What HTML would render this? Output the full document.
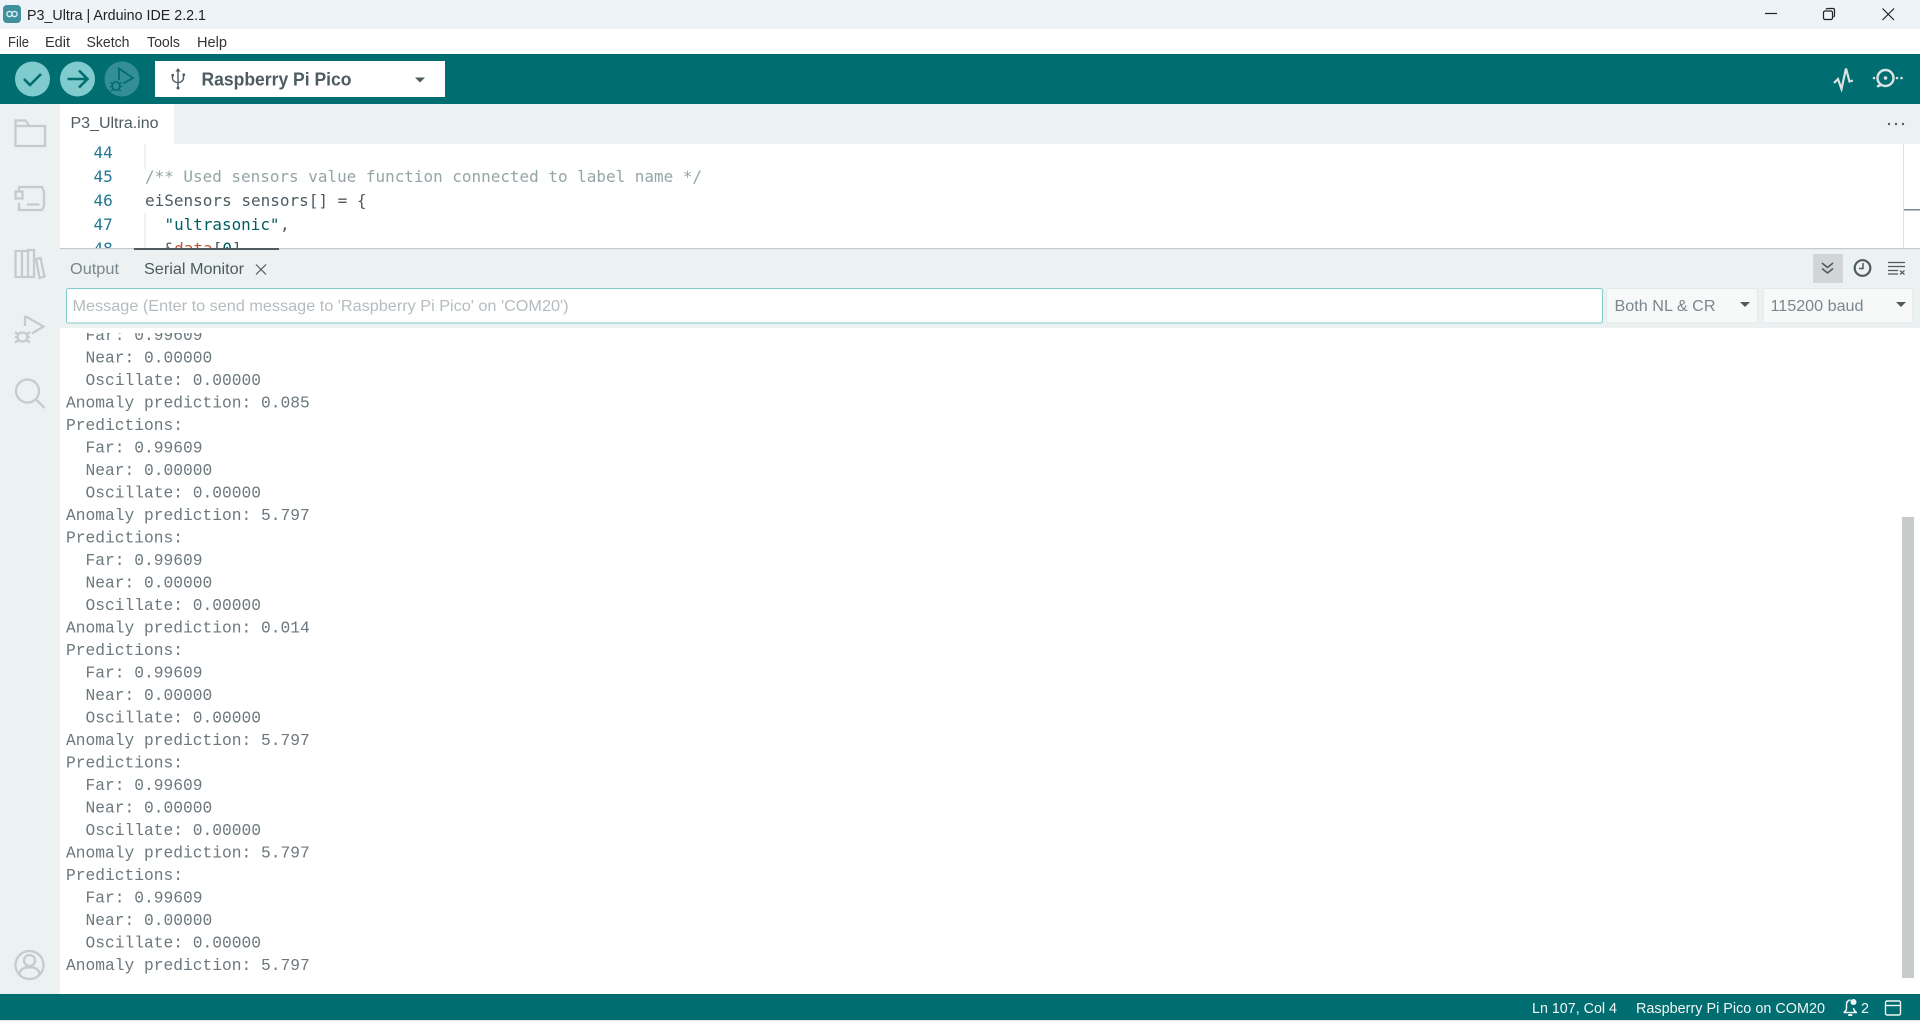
<!DOCTYPE html>
<html lang="en"><head><meta charset="utf-8"><title>P3_Ultra | Arduino IDE 2.2.1</title>
<style>
html,body{margin:0;padding:0;width:1920px;height:1021px;overflow:hidden;background:#fff}
svg{display:block}
.s{font-family:"Liberation Sans",sans-serif}
.c{font-family:"DejaVu Sans Mono",monospace;font-size:16px}
.m{font-family:"Liberation Mono",monospace;font-size:16.25px;fill:#6c787d}
.i{fill:none;stroke:#c6cccd;stroke-width:2.3}
</style></head><body>
<svg width="1920" height="1021" viewBox="0 0 1920 1021" xmlns="http://www.w3.org/2000/svg">
<rect width="1920" height="1021" fill="#fff"/>
<!-- title bar -->
<rect width="1920" height="29" fill="#eef3f8"/>
<rect x="3" y="5" width="18" height="18" rx="4" fill="#3f8f9c"/>
<g fill="none" stroke="#d8eef0" stroke-width="1.4"><circle cx="9.5" cy="14" r="2.6"/><circle cx="14.5" cy="14" r="2.6"/></g>
<text class="s" x="27" y="20" font-size="15" fill="#222" textLength="179" lengthAdjust="spacingAndGlyphs">P3_Ultra | Arduino IDE 2.2.1</text>
<path d="M1765 13.5H1777" stroke="#222" stroke-width="1.2"/>
<g fill="none" stroke="#222" stroke-width="1.2"><rect x="1823.5" y="11" width="9" height="8.5" rx="1.5"/><path d="M1826 9.5q.5-1 2-1h5q1.500 0 1.500 1.500v5q0 1.500-1 2"/></g>
<path d="M1882.500 8.500L1894 20M1894 8.500L1882.500 20" stroke="#222" stroke-width="1.2"/>
<!-- menu -->
<g class="s" font-size="15" fill="#333">
<text x="8" y="47" textLength="21" lengthAdjust="spacingAndGlyphs">File</text>
<text x="45" y="47" textLength="25" lengthAdjust="spacingAndGlyphs">Edit</text>
<text x="86.500" y="47" textLength="43" lengthAdjust="spacingAndGlyphs">Sketch</text>
<text x="147" y="47" textLength="33" lengthAdjust="spacingAndGlyphs">Tools</text>
<text x="197" y="47" textLength="30" lengthAdjust="spacingAndGlyphs">Help</text>
</g>
<!-- toolbar -->
<rect y="54" width="1920" height="50" fill="#006d70"/>
<circle cx="32.500" cy="79" r="17.500" fill="#7fcbcd"/>
<path d="M24 79l6 6 11-11" fill="none" stroke="#006d70" stroke-width="2.600"/>
<circle cx="77.500" cy="79" r="17.500" fill="#7fcbcd"/>
<path d="M67.500 79H87M79 70.500l8.500 8.500-8.500 8.500" fill="none" stroke="#006d70" stroke-width="2.600"/>
<circle cx="122" cy="79" r="17.500" fill="#348e96"/>
<path d="M119 80V68.500L133 78l-10 5.500" fill="none" stroke="#006d70" stroke-width="1.800"/>
<g fill="none" stroke="#006d70" stroke-width="1.600"><ellipse cx="116" cy="86" rx="3.800" ry="4.200"/><path d="M110.500 82.500l2.500 1.500M121.500 82.500l-2.500 1.500M110 86.500h2.500M122 86.500h-2.500M111 91l2.500-1.500M121 91l-2.500-1.500"/></g>
<rect x="155" y="61" width="290" height="36" fill="#fff"/>
<g fill="none" stroke="#4e5b61" stroke-width="1.400"><path d="M178 69V88M172.500 75v3.500q0 3 5.500 4.500q5.500-1.500 5.500-5v-2.500"/></g>
<path d="M175.500 71.500l2.500-3.500 2.500 3.500z" fill="#4e5b61"/><rect x="171.500" y="74" width="2.500" height="2.500" fill="#4e5b61"/><rect x="182.500" y="73.500" width="2.500" height="2.500" fill="#4e5b61"/><circle cx="178" cy="88" r="1.500" fill="#4e5b61"/>
<text class="s" x="201.500" y="85.500" font-size="18" font-weight="700" fill="#4e5b61" textLength="150" lengthAdjust="spacingAndGlyphs">Raspberry Pi Pico</text>
<path d="M415 77.500h10l-5 5z" fill="#4e5b61"/>
<path d="M1834 83l4-4 3.500 10L1846 68.500l3.500 13 3.500-1" fill="none" stroke="#dae3e3" stroke-width="2.200"/>
<g fill="#dae3e3"><circle cx="1885.500" cy="78" r="1.800"/><circle cx="1874" cy="78" r="1.300"/><circle cx="1897" cy="78" r="1.300"/><circle cx="1901.500" cy="78" r="1.300"/></g>
<circle cx="1885.500" cy="78" r="8" fill="none" stroke="#dae3e3" stroke-width="2.400"/><path d="M1881 85l-4 1.500" fill="none" stroke="#dae3e3" stroke-width="2.400"/>
<!-- sidebar and tab bar -->
<rect y="104" width="60" height="890" fill="#ecf1f1"/>
<rect x="60" y="104" width="1860" height="40" fill="#ecf1f1"/>
<rect x="60" y="104" width="114" height="40" fill="#fff"/>
<text class="s" x="70.500" y="128" font-size="15.500" fill="#4e5b61" textLength="88" lengthAdjust="spacingAndGlyphs">P3_Ultra.ino</text>
<g fill="#4e5b61"><circle cx="1889" cy="124" r="1.200"/><circle cx="1896" cy="124" r="1.200"/><circle cx="1903" cy="124" r="1.200"/></g>
<!-- sidebar icons -->
<path class="i" d="M15.500 120.500h10l4 5.500h15.500v20H15.500z"/><path class="i" d="M15.500 126h14"/>
<path class="i" d="M19 191v-4h23l2 5v14l-2 4H19v-7"/><path class="i" d="M15.500 191.500h7v7h-7z"/><path class="i" d="M27 204.500h12.500"/>
<path class="i" d="M15.500 251h6.500v26h-6.500zM22 251h6v26h-6zM28 277v-27h6v27zM34 277h-6"/><path class="i" d="M36 259l4.500-1 4 18.500-5 1.500z"/>
<path class="i" d="M25 316v10M25 316l18.500 10.500L32 333.500"/>
<ellipse class="i" cx="22.500" cy="337" rx="5" ry="4.500"/><path class="i" d="M15 332l3 2M30 332l-3 2M15 337h3M30 337h-3M15 342.500l3-2M30 342.500l-3-2"/>
<circle class="i" cx="27.500" cy="391" r="11.500"/><path class="i" d="M36 399.500l8.500 8.500"/>
<circle class="i" cx="29.500" cy="965" r="14"/><circle class="i" cx="29.500" cy="960.500" r="5.500"/><path class="i" d="M19 975.500q1-7 7-8h7q6 1 7 8"/>
<!-- editor -->
<path d="M145 144v25M145 213v35" stroke="#dfe4e5" stroke-width="1"/>
<g class="c" fill="#237893">
<text x="93.500" y="157.800">44</text><text x="93.500" y="181.800">45</text><text x="93.500" y="205.800">46</text><text x="93.500" y="229.800">47</text><text x="93.500" y="253.800">48</text>
</g>
<defs><clipPath id="ed"><rect x="60" y="144" width="1843" height="104"/></clipPath><clipPath id="mo"><rect x="60" y="333" width="1860" height="661"/></clipPath></defs>
<g clip-path="url(#ed)">
<text class="c" x="145" y="181.800" fill="#95a5a6" textLength="557" lengthAdjust="spacingAndGlyphs">/** Used sensors value function connected to label name */</text>
<text class="c" x="145" y="205.800" fill="#4e5b61">eiSensors sensors[] = {</text>
<text class="c" x="164.500" y="229.800" fill="#005c5f" textLength="115" lengthAdjust="spacingAndGlyphs">"ultrasonic"</text>
<text class="c" x="280" y="229.800" fill="#4e5b61">,</text>
<text class="c" x="164.500" y="253.800"><tspan fill="#4e5b61">&amp;</tspan><tspan fill="#c0563b">data</tspan><tspan fill="#4e5b61">[</tspan><tspan fill="#005c5f">0</tspan><tspan fill="#4e5b61">]</tspan></text>
</g>
<path d="M1903.500 144V248" stroke="#dfe2e3" stroke-width="1"/>
<rect x="1904" y="209" width="16" height="1.500" fill="#7b8a91"/>
<!-- panel header -->
<rect x="60" y="249" width="1860" height="79" fill="#ecf1f1"/>
<rect x="60" y="248" width="1860" height="1.200" fill="#c4c9ca"/>
<rect x="134" y="248" width="145" height="2" fill="#4e5b61"/>
<text class="s" x="70" y="274" font-size="16" fill="#7a878c" textLength="49" lengthAdjust="spacingAndGlyphs">Output</text>
<text class="s" x="144" y="274" font-size="16" fill="#4e5b61" textLength="100" lengthAdjust="spacingAndGlyphs">Serial Monitor</text>
<path d="M256 264.500l10 10M266 264.500l-10 10" stroke="#4e5b61" stroke-width="1.200"/>
<rect x="1813" y="254" width="30" height="29" fill="#d2d5d5"/>
<path d="M1822 263l5.500 4.500 5.500-4.500M1822 268.500l5.500 4.500 5.500-4.500" fill="none" stroke="#4e5b61" stroke-width="1.600"/>
<circle cx="1862.500" cy="268" r="7.800" fill="none" stroke="#4e5b61" stroke-width="2.200"/>
<path d="M1863 263v5.500h-4" fill="none" stroke="#4e5b61" stroke-width="1.500"/>
<path d="M1888 262.500h17M1888 266.500h17M1888 270.500h10M1888 274h10M1900 270.500l4.500 4M1904.500 270.500l-4.500 4" fill="none" stroke="#4e5b61" stroke-width="1.200"/>
<rect x="66.500" y="288.500" width="1536" height="34.500" rx="2" fill="#fff" stroke="#7fcbcd" stroke-width="1"/>
<text class="s" x="72.500" y="311" font-size="16" fill="#b5bcbf" textLength="496" lengthAdjust="spacingAndGlyphs">Message (Enter to send message to 'Raspberry Pi Pico' on 'COM20')</text>
<rect x="1606.500" y="288.500" width="151" height="34.500" rx="2" fill="#f7f9f9" stroke="#e3e8e8"/>
<text class="s" x="1614.500" y="311" font-size="16" fill="#7a878c" textLength="101" lengthAdjust="spacingAndGlyphs">Both NL &amp; CR</text>
<path d="M1740 302h10l-5 5z" fill="#4e5b61"/>
<rect x="1763" y="288.500" width="150" height="34.500" rx="2" fill="#f7f9f9" stroke="#e3e8e8"/>
<text class="s" x="1770.500" y="311" font-size="16" fill="#7a878c" textLength="93" lengthAdjust="spacingAndGlyphs">115200 baud</text>
<path d="M1896 302h10l-5 5z" fill="#4e5b61"/>
<!-- monitor output -->
<g clip-path="url(#mo)" class="m">
<text x="66" y="340" xml:space="preserve">  Far: 0.99609</text>
<text x="66" y="362.500" xml:space="preserve">  Near: 0.00000</text>
<text x="66" y="385" xml:space="preserve">  Oscillate: 0.00000</text>
<text x="66" y="407.500">Anomaly prediction: 0.085</text>
<text x="66" y="430">Predictions:</text>
<text x="66" y="452.500" xml:space="preserve">  Far: 0.99609</text>
<text x="66" y="475" xml:space="preserve">  Near: 0.00000</text>
<text x="66" y="497.500" xml:space="preserve">  Oscillate: 0.00000</text>
<text x="66" y="520">Anomaly prediction: 5.797</text>
<text x="66" y="542.500">Predictions:</text>
<text x="66" y="565" xml:space="preserve">  Far: 0.99609</text>
<text x="66" y="587.500" xml:space="preserve">  Near: 0.00000</text>
<text x="66" y="610" xml:space="preserve">  Oscillate: 0.00000</text>
<text x="66" y="632.500">Anomaly prediction: 0.014</text>
<text x="66" y="655">Predictions:</text>
<text x="66" y="677.500" xml:space="preserve">  Far: 0.99609</text>
<text x="66" y="700" xml:space="preserve">  Near: 0.00000</text>
<text x="66" y="722.500" xml:space="preserve">  Oscillate: 0.00000</text>
<text x="66" y="745">Anomaly prediction: 5.797</text>
<text x="66" y="767.500">Predictions:</text>
<text x="66" y="790" xml:space="preserve">  Far: 0.99609</text>
<text x="66" y="812.500" xml:space="preserve">  Near: 0.00000</text>
<text x="66" y="835" xml:space="preserve">  Oscillate: 0.00000</text>
<text x="66" y="857.500">Anomaly prediction: 5.797</text>
<text x="66" y="880">Predictions:</text>
<text x="66" y="902.500" xml:space="preserve">  Far: 0.99609</text>
<text x="66" y="925" xml:space="preserve">  Near: 0.00000</text>
<text x="66" y="947.500" xml:space="preserve">  Oscillate: 0.00000</text>
<text x="66" y="970">Anomaly prediction: 5.797</text>
</g>
<rect x="1902" y="517" width="12" height="461" fill="#c8cbcb"/>
<!-- status bar -->
<rect y="994" width="1920" height="26" fill="#006d70"/>
<rect y="1020" width="1920" height="1" fill="#dfe4e4"/>
<g class="s" font-size="15" fill="#f1f6f6">
<text x="1532" y="1013" textLength="85" lengthAdjust="spacingAndGlyphs">Ln 107, Col 4</text>
<text x="1636" y="1013" textLength="189" lengthAdjust="spacingAndGlyphs">Raspberry Pi Pico on COM20</text>
<text x="1861" y="1013" textLength="8" lengthAdjust="spacingAndGlyphs">2</text>
</g>
<path d="M1844 1012q2.500-1 2.500-4v-3.500q0-4 4-4.500M1856 1012q-2-1-2.500-4M1843.500 1012.500h13.500" fill="none" stroke="#f1f6f6" stroke-width="1.500"/>
<circle cx="1853.500" cy="1002" r="3" fill="#f1f6f6"/><rect x="1848" y="1014" width="4.500" height="2" rx="1" fill="#f1f6f6"/>
<rect x="1885.500" y="1001" width="15" height="14" rx="1.500" fill="none" stroke="#f1f6f6" stroke-width="1.400"/><path d="M1885.500 1005.500h15" stroke="#f1f6f6" stroke-width="1.400"/>
</svg>
</body></html>
